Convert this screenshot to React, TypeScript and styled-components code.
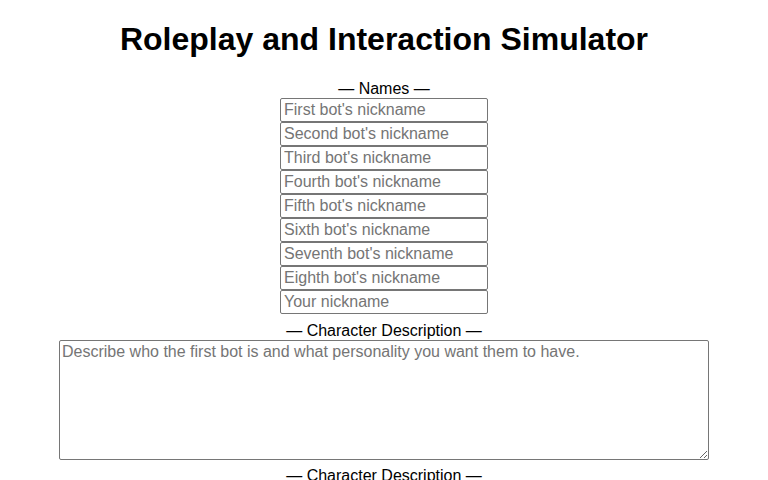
import React from 'react'
import styled, { createGlobalStyle } from 'styled-components'

const GlobalStyle = createGlobalStyle`
  body {
    margin: 8px;
    background: #fff;
    color: #000;
    font-family: 'Liberation Sans', Arial, sans-serif;
  }
`

const Page = styled.main`
  display: flex;
  flex-direction: column;
  align-items: center;
`

const Title = styled.h1`
  margin: 13px 0 22px;
  font-size: 32px;
  font-weight: bold;
  line-height: 37px;
  text-align: center;
`

const SectionLabel = styled.div<{ $top?: number }>`
  margin-top: ${({ $top }) => $top ?? 0}px;
  font-size: 16px;
  line-height: 18px;
  text-align: center;
`

const NameList = styled.div`
  display: flex;
  flex-direction: column;
`

const NameInput = styled.input`
  box-sizing: border-box;
  width: 208px;
  height: 24px;
  margin: 0;
  padding: 1px 3px;
  border: 1px solid #767676;
  border-radius: 2px;
  font-family: 'Liberation Sans', Arial, sans-serif;
  font-size: 16px;
  color: #000;
  &::placeholder {
    color: #757575;
  }
`

const DescriptionBox = styled.textarea`
  box-sizing: border-box;
  width: 650px;
  height: 120px;
  margin: 0;
  padding: 2px;
  border: 1px solid #767676;
  border-radius: 2px;
  font-family: 'Liberation Sans', Arial, sans-serif;
  font-size: 16px;
  line-height: 18px;
  &::placeholder {
    color: #757575;
  }
`

const nicknames = [
  "First bot's nickname",
  "Second bot's nickname",
  "Third bot's nickname",
  "Fourth bot's nickname",
  "Fifth bot's nickname",
  "Sixth bot's nickname",
  "Seventh bot's nickname",
  "Eighth bot's nickname",
  'Your nickname',
]

const App = () => {
  return (
    <>
      <GlobalStyle />
      <Page>
        <Title>Roleplay and Interaction Simulator</Title>
        <SectionLabel>— Names —</SectionLabel>
        <NameList>
          {nicknames.map(name => (
            <NameInput key={name} type="text" placeholder={name} />
          ))}
        </NameList>
        <SectionLabel $top={8}>— Character Description —</SectionLabel>
        <DescriptionBox placeholder="Describe who the first bot is and what personality you want them to have." />
        <SectionLabel $top={7}>— Character Description —</SectionLabel>
        <DescriptionBox placeholder="Describe who the second bot is and what personality you want them to have." />
      </Page>
    </>
  )
}

export default App
